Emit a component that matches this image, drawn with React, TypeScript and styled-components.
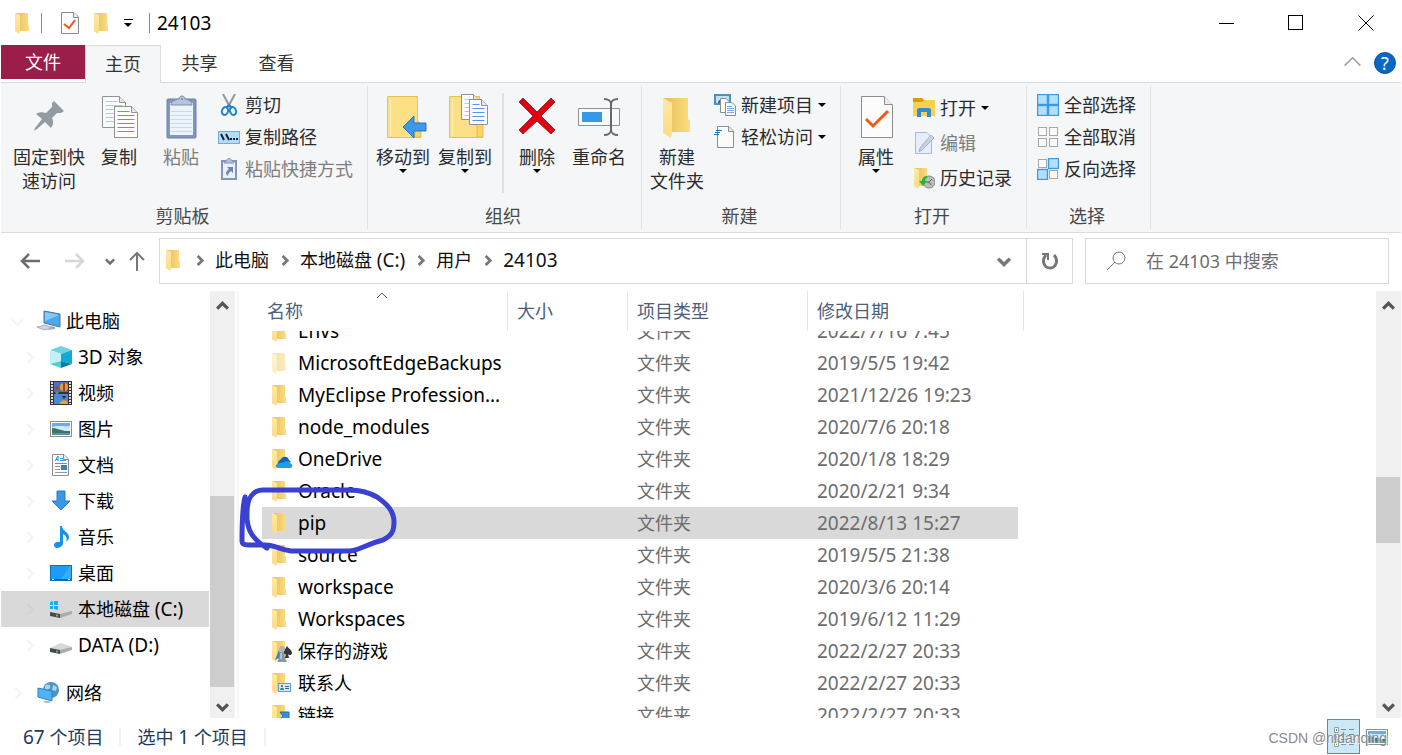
import React, { useLayoutEffect, useRef } from "react";
import styled, { createGlobalStyle, css } from "styled-components";

const GlobalStyle = createGlobalStyle`
  * { box-sizing: border-box; }
  body { margin: 0; background: #fff; }
  button, input, table {
    font: inherit;
    color: inherit;
  }
  button {
    margin: 0;
    padding: 0;
    border: 0;
    background: none;
    text-align: center;
  }
  svg { display: block; flex: none; }
`;

/* ---------- text ---------- */

const Latin = styled.span`
  font-size: 19px;
`;

/* Latin runs are set one step larger than the Chinese characters around them. */
function Label({ children }: { children: string }) {
  return (
    <>
      {children.split(/([\x21-\x7e]+(?: [\x21-\x7e]+)*)/).map((part, i) =>
        i % 2 ? <Latin key={i}>{part}</Latin> : part
      )}
    </>
  );
}

/* ---------- icons ---------- */

function Folder({ faded = false, badge }: { faded?: boolean; badge?: React.ReactNode }) {
  return (
    <svg width="22" height="22" viewBox="0 0 22 22">
      <defs>
        <linearGradient id="fBack" x1="0" x2="1" y1="0" y2="0">
          <stop offset="0" stopColor="#e6bd57" />
          <stop offset="1" stopColor="#fbdd80" />
        </linearGradient>
        <linearGradient id="fFlap" x1="0" x2="0" y1="0" y2="1">
          <stop offset="0" stopColor="#ffe9a6" />
          <stop offset="1" stopColor="#fbdc82" />
        </linearGradient>
      </defs>
      <g opacity={faded ? 0.5 : 1}>
        <path d="M1 1H14V12L15 14V19H5Z" fill="url(#fBack)" />
        <path d="M1 1L6 3V19L5 22L1 19Z" fill="url(#fFlap)" />
      </g>
      {badge}
    </svg>
  );
}

const cloudBadge = (
  <g>
    <path d="M7 17C6 14 9 12 10 11C12 8 17 8 18 12L20 14L8 18Z" fill="#0a64b8" />
    <path d="M7 20C3 19 5 15 9 15L13 14C15 13 19 13 19 15C22 16 22 20 19 20Z" fill="#1e9de6" />
  </g>
);
const gamesBadge = (
  <g>
    <path d="M16 6C18 9 21 10 21 13C21 15 18 16 17 14L18 18H14L15 14C13 15 12 13 13 11Z" fill="#33363b" />
    <path d="M4 20L8 10L10 17Z" fill="#3b82c4" />
    <circle cx="11" cy="9" r="3" fill="#a9b4bd" />
    <path d="M9 12H13L14 18L16 22H6L8 18Z" fill="#8b98a3" />
    <path d="M10 13L10 19" stroke="#dfe6ea" />
  </g>
);
const contactBadge = (
  <g>
    <rect x="7.500" y="11.500" width="12" height="8" fill="#cfe8fa" stroke="#5da0c8" />
    <circle cx="11" cy="14" r="1" fill="#6b4a33" />
    <path d="M9 18C9 15 13 15 13 18Z" fill="#2f8a6a" />
    <path d="M14 14.500H18M14 16.500H18" stroke="#34719c" />
  </g>
);
const linkBadge = (
  <path d="M9 8H18V17L15 14L9 20L7 18L12 12Z" fill="#3a8fdd" stroke="#1f6db5" strokeWidth="1" />
);

function BigFolder() {
  return (
    <svg width="44" height="44" viewBox="0 0 44 44">
      <path d="M8 3H33V24L35 26V37H16Z" fill="url(#fBack)" />
      <path d="M8 3L17 8V37L16 43L8 38Z" fill="url(#fFlap)" />
    </svg>
  );
}

const flatFolder = (
  <g>
    <path d="M4.500 1.500H34.500V26L37.500 29V42.500H4.500Z" fill="#fddf85" stroke="#e7c04e" />
    <path d="M7.500 4V41" stroke="#fff0b8" />
    <path d="M32 42V29L35 26L38 29V42Z" fill="#fbd264" stroke="#e7c04e" />
  </g>
);

function sheet(x: number, y: number, w: number, h: number, line: string) {
  const rows: number[] = [];
  for (let r = y + 5; r < y + h - 3; r += 4) rows.push(r);
  return (
    <g>
      <path d={`M${x} ${y}H${x + w - 6}L${x + w} ${y + 6}V${y + h}H${x}Z`} fill="#fcfcfd" stroke="#929292" />
      <path d={`M${x + w - 6} ${y}V${y + 6}H${x + w}`} fill="#e6e6e6" stroke="#929292" />
      {rows.map((r, i) => (
        <path key={r} d={`M${x + 3} ${r}H${x + w - (i === 0 ? 8 : 3)}`} stroke={line} />
      ))}
    </g>
  );
}

const PinIcon = () => (
  <svg width="44" height="44" viewBox="0 0 44 44">
    <path d="M27 6L37 16L34 18L30 18L25 23C27 27 26 30 24 33L18 27L10 34L7 36L8 33L15 24L9 19C12 17 15 17 19 18L25 12V8Z" fill="#919ca2" />
  </svg>
);
const CopyIcon = () => (
  <svg width="44" height="48" viewBox="0 0 44 48">
    {sheet(5.5, 3.5, 23, 31, "#a9cbf6")}
    {sheet(17.5, 13.5, 23, 31, "#5596ea")}
  </svg>
);
const PasteIcon = () => (
  <svg width="44" height="48" viewBox="0 0 44 48">
    <rect x="8" y="6" width="29" height="39" rx="1" fill="#8195bd" stroke="#6c80a8" />
    <rect x="11" y="10" width="23" height="32" fill="#edf3fb" />
    <path d="M12 18.500H33M12 22.500H33M12 26.500H33M12 30.500H33M12 34.500H33M12 38.500H33" stroke="#ccd8e8" />
    <path d="M12 12C12 8 16 7 20 6C20 2 26 2 26 6C30 7 33 8 33 12Z" fill="#b7c3da" stroke="#7c90b4" />
    <circle cx="23" cy="6" r="1" fill="#6f84aa" />
  </svg>
);
const MoveToIcon = () => (
  <svg width="48" height="48" viewBox="0 0 48 48">
    <g transform="translate(4 2)">{flatFolder}</g>
    <path d="M24 34L35 23V30H47V38H35V45Z" fill="#3a9ae6" stroke="#2577bd" />
  </svg>
);
const CopyToIcon = () => (
  <svg width="48" height="48" viewBox="0 0 48 48">
    <g transform="translate(4 2)">{flatFolder}</g>
    {sheet(20.5, 1.5, 18, 25, "#a9cbf6")}
    {sheet(28.5, 6.5, 18, 25, "#5596ea")}
  </svg>
);
const DeleteIcon = () => (
  <svg width="44" height="44" viewBox="0 0 44 44">
    <path d="M4 7L8 3L22 17L36 3L40 7L26 21L40 35L36 39L22 26L8 39L4 35L18 21Z" fill="#e3000f" stroke="#8f2630" />
  </svg>
);
const RenameIcon = () => (
  <svg width="44" height="44" viewBox="0 0 44 44">
    <path d="M1.500 13.500H42.500V30.500H1.500Z" fill="#f8f9fa" stroke="#929292" />
    <rect x="5" y="17" width="20" height="10" fill="#3699e8" />
    <path d="M27 4C31 4 34 6 34 9V35C34 38 31 40 27 40M41 4C37 4 34 6 34 9M34 35C34 38 37 40 41 40" fill="none" stroke="#696969" strokeWidth="2" />
  </svg>
);
const PropertiesIcon = () => (
  <svg width="44" height="44" viewBox="0 0 44 44">
    <path d="M7.500 1.500H30L38.500 10V42.500H7.500Z" fill="#fcfcfc" stroke="#8c8c8c" />
    <path d="M30.500 1.500V9.500H38.500" fill="#ebebeb" stroke="#8c8c8c" />
    <path d="M12 24L19 31L34 16" fill="none" stroke="#f25a18" strokeWidth="3" />
  </svg>
);
const SmallCheckIcon = () => (
  <svg width="18" height="22" viewBox="0 0 18 22">
    <path d="M.5 .5H13L17.500 5V21.500H.5Z" fill="#fbfbfb" stroke="#8a8a8a" />
    <path d="M12.500 .5V5.500H17.500" fill="#eee" stroke="#8a8a8a" />
    <path d="M3 12L8 16L14 8" fill="none" stroke="#ee5a1b" strokeWidth="2" />
  </svg>
);
const ScissorsIcon = () => (
  <svg width="22" height="22" viewBox="0 0 22 22">
    <path d="M5 0L12 13M17 0L10 13" stroke="#8d98a0" strokeWidth="2" />
    <path d="M11 11L8 14M11 11L14 14" stroke="#1c7fc0" strokeWidth="2" />
    <ellipse cx="7" cy="17" rx="3" ry="4" fill="none" stroke="#1d86c7" strokeWidth="2" transform="rotate(20 7 17)" />
    <ellipse cx="15" cy="17" rx="3" ry="4" fill="none" stroke="#1d86c7" strokeWidth="2" transform="rotate(-20 15 17)" />
  </svg>
);
const PathIcon = () => (
  <svg width="22" height="22" viewBox="0 0 22 22">
    <rect x=".5" y="5.500" width="21" height="12" fill="#b3dcfb" stroke="#7aa9cc" />
    <path d="M3 8L6 14M8 8L11 14" stroke="#17242e" strokeWidth="2" />
    <path d="M12 13H14M15 13H17M18 13H20" stroke="#17242e" strokeWidth="2" />
  </svg>
);
const ShortcutIcon = () => (
  <svg width="22" height="22" viewBox="0 0 22 22">
    <rect x="4" y="3" width="14" height="18" fill="#eaf0f9" stroke="#8295bb" strokeWidth="2" />
    <path d="M6 5C6 3 9 3 9 2C9 0 13 0 13 2C13 3 16 3 16 5Z" fill="#b3c0da" stroke="#8295bb" />
    <path d="M9 9H15V15L13 13C11 14 10 16 10 18L8 16C8 14 9 12 11 11Z" fill="#6d84ac" />
  </svg>
);
const NewItemIcon = () => (
  <svg width="22" height="22" viewBox="0 0 22 22">
    <rect x="1" y="1" width="15" height="9" fill="#bfe2f7" stroke="#4d8fb5" strokeWidth="2" />
    <path d="M4 9C4 5 8 5 8 9Z" fill="#2d6a58" />
    <path d="M6.500 4.500H12L15.500 8V18.500H6.500Z" fill="#fafafa" stroke="#8d8d8d" />
    <path d="M11.500 8.500H18L21.500 12V21.500H11.500Z" fill="#fafafa" stroke="#8d8d8d" />
    <path d="M13 12.500H18M13 14.500H20M13 16.500H20M13 18.500H20" stroke="#76a9ea" />
  </svg>
);
const EasyAccessIcon = () => (
  <svg width="22" height="22" viewBox="0 0 22 22">
    <path d="M3.500 .5H15L19.500 5V21.500H3.500Z" fill="#fbfbfb" stroke="#8d8d8d" />
    <path d="M14.500 .5V5.500H19.500" fill="#e8e8e8" stroke="#8d8d8d" />
    <path d="M2 4.500H8M1 6.500H6M0 8.500H5" stroke="#2372b8" />
  </svg>
);
const OpenIcon = () => (
  <svg width="22" height="22" viewBox="0 0 22 22">
    <path d="M0 1H9L11 3H22V19H0Z" fill="#fbcf50" />
    <path d="M0 1H9L11 3L9 5H0Z" fill="#d99b00" />
    <path d="M4 20V13C4 12 5 11 6 11H16C17 11 18 12 18 13V20H14V15H8V20Z" fill="#3489d3" />
  </svg>
);
const EditIcon = () => (
  <svg width="22" height="22" viewBox="0 0 22 22">
    <path d="M2.500 .5H14L18.500 5V21.500H2.500Z" fill="#e7eefb" stroke="#a8b9d6" />
    <path d="M18 3L21 6L9 18L6 20L7 16Z" fill="#c5d3e8" stroke="#a0b2cd" />
  </svg>
);
const historyBadge = (
  <g>
    <circle cx="16" cy="15" r="6" fill="#b9bdbd" stroke="#7e8484" />
    <path d="M12 15H16L19 12M16 15L18 18" fill="none" stroke="#5d6262" />
    <path d="M14 9C10 9 9 12 9 14H6L10 19L14 14H12C12 12 13 11 14 11Z" fill="#28b334" />
  </g>
);

function SelectIcon({ on }: { on: number[] }) {
  return (
    <svg width="22" height="22" viewBox="0 0 22 22">
      {[0, 1, 2, 3].map((i) => {
        const lit = on.includes(i);
        const x = (i % 2) * 11;
        const y = i > 1 ? 11 : 0;
        return lit ? (
          <rect key={i} x={x + 0.5} y={y + 0.5} width="10" height="10" fill="#b5defd" stroke="#3a9be4" strokeWidth="1.4" />
        ) : (
          <rect key={i} x={x + 1.5} y={y + 1.5} width="8" height="8" fill="#fafafa" stroke="#a8a8a8" />
        );
      })}
    </svg>
  );
}

function Chevron({ dir, size = 10, color = "#666", weight = 2 }: { dir: "up" | "down" | "right"; size?: number; color?: string; weight?: number }) {
  const d = { up: "M1 8L6 3L11 8", down: "M1 4L6 9L11 4", right: "M4 1L9 6L4 11" }[dir];
  return (
    <svg width={size} height={size} viewBox="0 0 12 12">
      <path d={d} fill="none" stroke={color} strokeWidth={weight} />
    </svg>
  );
}
const DropArrow = () => (
  <svg width="8" height="4" viewBox="0 0 8 4">
    <path d="M0 0H8L4 4Z" fill="#000" />
  </svg>
);

function NavArrow({ kind, color }: { kind: "left" | "right" | "up"; color: string }) {
  const turn = { left: 0, right: 180, up: 90 }[kind];
  return (
    <svg width="20" height="20" viewBox="0 0 20 20">
      <path
        d="M20 10H2M9 3L2 10L9 17"
        fill="none"
        stroke={color}
        strokeWidth={kind === "up" ? 2 : 2.5}
        transform={`rotate(${turn} 10 10)`}
      />
    </svg>
  );
}

/* navigation tree icons */
const PcIcon = () => (
  <svg width="24" height="22" viewBox="0 0 24 22">
    <path d="M7 1L23 4V17L7 13Z" fill="#4aa9ee" stroke="#5b7282" />
    <path d="M8 2L22 5L8 11Z" fill="#85cbfa" />
    <path d="M13 16L18 17V19L11 20Z" fill="#9aa9b4" />
    <path d="M0 17L8 15L15 18L7 20Z" fill="#cfd6dc" stroke="#a6b0b8" />
  </svg>
);
const CubeIcon = () => (
  <svg width="22" height="22" viewBox="0 0 22 22">
    <path d="M11 0L22 4L11 8L0 4Z" fill="#6fd3e2" />
    <path d="M0 4L11 8V15L0 18Z" fill="#c3f0f3" />
    <path d="M22 4L11 8V15L22 18Z" fill="#12a9d6" />
    <path d="M0 18L11 15V22Z" fill="#4ccfd6" />
    <path d="M22 18L11 15V22Z" fill="#0b7f9c" />
  </svg>
);
const VideoIcon = () => (
  <svg width="22" height="24" viewBox="0 0 22 24">
    <rect width="22" height="24" fill="#333" />
    <path d="M2 1V23M20 1V23" stroke="#ddd" strokeWidth="2" strokeDasharray="2 1" />
    <rect x="4" y="1" width="14" height="10" fill="#4473c5" />
    <rect x="4" y="13" width="14" height="10" fill="#4c86d8" />
    <circle cx="14" cy="6" r="4" fill="#d9a52b" />
    <path d="M14 2V10" stroke="#b5352d" strokeWidth="2" />
    <circle cx="7" cy="7" r="2" fill="#c23b30" />
    <path d="M12 15H16L14 18Z" fill="#222" />
    <path d="M10 23C10 18 18 18 18 23Z" fill="#e7a820" />
    <path d="M5 11H9L8 13H6Z" fill="#46a33d" />
  </svg>
);
const PictureIcon = () => (
  <svg width="22" height="16" viewBox="0 0 22 16">
    <rect x=".5" y=".5" width="21" height="15" fill="#fff" stroke="#8f8f8f" />
    <rect x="2" y="2" width="18" height="12" fill="#6fa9ea" />
    <path d="M2 6C8 4 12 6 20 5V10H2Z" fill="#d2e9fb" />
    <path d="M2 7C6 7 10 9 15 10L20 10V12H2Z" fill="#3d7660" />
    <path d="M2 12H20V14H2Z" fill="#5b8ab5" />
  </svg>
);
const DocIcon = () => (
  <svg width="22" height="22" viewBox="0 0 22 22">
    <path d="M2.500 .5H14L18.500 5V21.500H2.500Z" fill="#fcfcfc" stroke="#8d8d8d" />
    <path d="M13.500 .5V5.500H18.500" fill="#e8e8e8" stroke="#8d8d8d" />
    <path d="M5 7L8 2V7M6 5.500H8" fill="none" stroke="#2b8fd0" strokeWidth="1" />
    <path d="M10 4.500H13M10 6.500H16M5 9.500H17" stroke="#3c9fda" strokeWidth="1" />
    <path d="M5 12.500H10M5 15.500H10M5 18.500H17" stroke="#8b9aa6" />
    <rect x="11" y="11" width="6" height="5" fill="#3e7fb0" />
  </svg>
);
const DownloadIcon = () => (
  <svg width="22" height="22" viewBox="0 0 22 22">
    <path d="M7 1H15V11H20L11 20L2 11H7Z" fill="#3b97e3" stroke="#2b7bc2" />
  </svg>
);
const MusicIcon = () => (
  <svg width="22" height="24" viewBox="0 0 22 24">
    <path d="M10 1H12C12 6 19 7 19 12C19 15 17 16 16 16C18 12 15 10 13 9V19C12 23 4 25 4 20C4 17 8 16 10 17Z" fill="#1393ea" />
  </svg>
);
const DesktopIcon = () => (
  <svg width="22" height="16" viewBox="0 0 22 16">
    <rect x=".5" y=".5" width="21" height="15" fill="#1b9cf8" stroke="#0f70b8" />
    <path d="M11 14L20 1H21V14Z" fill="#3aadff" />
    <path d="M1 14.500H21" stroke="#0c5f9e" />
    <path d="M2 14.500H4M18 14.500H20" stroke="#fff" />
  </svg>
);
function DiskIcon({ system = false }: { system?: boolean }) {
  return (
    <svg width="22" height="20" viewBox="0 0 22 20">
      <path d="M0 13L11 8L22 12L11 17Z" fill="#d5d7d9" />
      <path d="M0 13L10 15V19L0 17Z" fill="#48494b" />
      <path d="M10 15L22 12V15L10 19Z" fill="#a9abad" />
      <path d="M6 16.500H8" stroke="#53c653" strokeWidth="2" />
      {system && (
        <path d="M0 3L3 2V6H0ZM4 2H8V6H4ZM0 7H3V10L0 10ZM4 7H8V11L4 10Z" fill="#14b1ef" />
      )}
    </svg>
  );
}
const NetworkIcon = () => (
  <svg width="24" height="22" viewBox="0 0 24 22">
    <circle cx="14" cy="8" r="8" fill="#4b95c4" />
    <path d="M8 4C11 1 14 3 13 6C11 8 9 8 8 10ZM16 3L20 5L19 9L15 8Z" fill="#a8d4ec" />
    <path d="M1 6L15 9V19L1 15Z" fill="#4fb3f4" stroke="#2f85bf" />
    <path d="M6 19L12 19L14 21H8Z" fill="#b4bdc5" />
  </svg>
);

/* ---------- window shell ---------- */

const Window = styled.div`
  display: flex;
  flex-direction: column;
  height: 100vh;
  padding: 0 1px;
  overflow: hidden;
  background: #fff;
  color: #000;
  font: 18px/24px "Noto Sans", "Noto Sans CJK SC", sans-serif;
`;

const TitleBar = styled.header`
  display: flex;
  align-items: center;
  height: 45px;
  padding-left: 13px;
  flex: none;
`;
const QuickButton = styled.button<{ $gap?: number }>`
  display: flex;
  align-items: center;
  justify-content: center;
  flex-direction: column;
  gap: 3px;
  width: 22px;
  height: 24px;
  margin-left: ${(p) => p.$gap ?? 0}px;
`;
const TitleRule = styled.span<{ $gap: number }>`
  width: 1px;
  height: 20px;
  margin-left: ${(p) => p.$gap}px;
  background: #8c8c8c;
`;
const Title = styled.h1`
  flex: 1;
  margin: 0 0 0 7px;
  font-size: 19px;
  font-weight: 400;
`;
const Dash = styled.span`
  width: 9px;
  height: 1px;
  background: #000;
`;
const WindowButton = styled.button`
  display: flex;
  align-items: center;
  justify-content: center;
  width: 70px;
  height: 45px;
`;

const TabBar = styled.nav`
  display: flex;
  height: 38px;
  flex: none;
  border-bottom: 1px solid #dadbdc;
`;
const Tab = styled.button<{ $kind?: "file" | "active" }>`
  width: 77px;
  height: 37px;
  padding-bottom: 2px;
  color: #333;
  ${(p) =>
    p.$kind === "file" &&
    css`
      width: 84px;
      height: 34px;
      padding-bottom: 0;
      background: #9b1d4a;
      color: #fff;
    `}
  ${(p) =>
    p.$kind === "active" &&
    css`
      width: 76px;
      height: 38px;
      border: 1px solid #dadbdc;
      border-bottom: 0;
      background: #f5f6f7;
    `}
`;
const TabTools = styled.div`
  display: flex;
  align-items: center;
  gap: 12px;
  margin-left: auto;
  padding: 0 5px 2px 0;
`;
const HelpButton = styled.button`
  width: 22px;
  height: 22px;
  border: 1px solid #0a539c;
  border-radius: 50%;
  background: #0668c8;
  color: #fff;
  line-height: 20px;
`;

/* ---------- ribbon ---------- */

const Ribbon = styled.div`
  display: flex;
  flex: none;
  height: 150px;
  padding: 3px 0;
  border-bottom: 1px solid #dadbdc;
  background: #f5f6f7;
`;
const Group = styled.section<{ $width: number }>`
  display: flex;
  flex-direction: column;
  flex: none;
  width: ${(p) => p.$width}px;
  border-right: 1px solid #e2e3e4;
`;
const GroupBody = styled.div<{ $indent: number }>`
  display: flex;
  align-items: flex-start;
  flex: 1;
  padding: 6px 0 0 ${(p) => p.$indent}px;
`;
const GroupCaption = styled.h2`
  margin: 0;
  padding: 0 3px 1px 0;
  color: #484848;
  font-size: 18px;
  line-height: 24px;
  font-weight: 400;
  text-align: center;
`;
const BigButton = styled.button<{ $width?: number }>`
  display: flex;
  flex-direction: column;
  align-items: center;
  width: ${(p) => p.$width ?? 62}px;
  color: #2b2b2b;
  white-space: nowrap;
  &:disabled { color: #7d7d7d; }
`;
const BigIcon = styled.span`
  display: flex;
  align-items: center;
  height: 50px;
  margin-bottom: 3px;
`;
const SmallList = styled.div<{ $gap?: number; $left?: number; $top?: number }>`
  display: flex;
  flex-direction: column;
  align-items: flex-start;
  gap: ${(p) => p.$gap ?? 8}px;
  margin: ${(p) => p.$top ?? 1}px 0 0 ${(p) => p.$left ?? 0}px;
`;
const SmallButton = styled.button`
  display: flex;
  align-items: center;
  gap: 5px;
  height: 24px;
  color: #2b2b2b;
  white-space: nowrap;
  &:disabled { color: #7d7d7d; }
`;
const InnerRule = styled.span`
  width: 2px;
  height: 100px;
  margin: 1px 2px 0 6px;
  background: #dfe0e2;
`;

/* ---------- address row ---------- */

const AddressRow = styled.div`
  display: flex;
  flex: none;
  height: 58px;
  padding: 5px 12px 7px 14px;
`;
const NavButton = styled.button<{ $width: number }>`
  display: flex;
  align-items: center;
  justify-content: center;
  width: ${(p) => p.$width}px;
`;
const AddressBox = styled.div`
  display: flex;
  flex: 1;
  border: 1px solid #d9d9d9;
`;
const Crumbs = styled.ol`
  display: flex;
  align-items: center;
  flex: 1;
  margin: 0;
  padding: 0 0 2px 5px;
  list-style: none;
`;
const Crumb = styled.li`
  display: flex;
  align-items: center;
  gap: 10px;
  margin-left: 10px;
  &:first-of-type { margin-left: 7px; }
`;
const CrumbLink = styled.a`
  color: #111;
  text-decoration: none;
`;
const RefreshButton = styled.button`
  display: flex;
  align-items: center;
  justify-content: center;
  width: 46px;
  border-left: 1px solid #d9d9d9;
`;
const SearchBox = styled.label`
  display: flex;
  align-items: center;
  width: 304px;
  margin-left: 12px;
  padding-left: 20px;
  gap: 20px;
  border: 1px solid #d9d9d9;
`;
const SearchInput = styled.input`
  flex: 1;
  min-width: 0;
  padding: 0;
  border: 0;
  outline: 0;
  background: none;
  &::placeholder { color: #6d6d6d; opacity: 1; }
`;

/* ---------- main area ---------- */

const Main = styled.div`
  display: flex;
  flex: 1;
  min-height: 0;
`;
const Tree = styled.ul`
  width: 209px;
  flex: none;
  margin: 0;
  padding: 12px 0 0;
  overflow: hidden;
  list-style: none;
`;
const TreeItem = styled.li<{ $level: number; $selected?: boolean; $spaced?: boolean }>`
  display: flex;
  align-items: center;
  height: 36px;
  margin: ${(p) => (p.$spaced ? 12 : 0)}px 1px 0 0;
  padding-left: ${(p) => 10 + p.$level * 12}px;
  background: ${(p) => (p.$selected ? "#d9d9d9" : "transparent")};
`;
const TreeIcon = styled.span`
  display: flex;
  justify-content: center;
  width: 24px;
  margin: 0 5px 0 13px;
`;
const ScrollTrack = styled.div`
  display: flex;
  flex-direction: column;
  align-items: flex-start;
  width: 25px;
  flex: none;
  background: #f0f0f0;
`;
const ScrollButton = styled.button<{ $height: number }>`
  display: flex;
  align-items: center;
  justify-content: center;
  width: 25px;
  height: ${(p) => p.$height}px;
  flex: none;
`;
const ScrollSpace = styled.span<{ $grow: number }>`
  flex: ${(p) => p.$grow} 0 0;
`;
const ScrollThumb = styled.span<{ $grow: number }>`
  flex: ${(p) => p.$grow} 0 0;
  width: 24px;
  background: #cdcdcd;
`;
const ListPane = styled.div`
  position: relative;
  display: flex;
  flex: 1;
  min-width: 0;
  margin-left: 2px;
  border-left: 2px solid #f5f5f5;
`;
const ListScroller = styled.div`
  flex: 1;
  padding-left: 19px;
  overflow: hidden;
`;
const FileTable = styled.table`
  width: 766px;
  table-layout: fixed;
  border-collapse: separate;
  border-spacing: 0;
`;
const HeadCell = styled.th<{ $width: number }>`
  position: sticky;
  top: 0;
  z-index: 1;
  width: ${(p) => p.$width}px;
  height: 40px;
  padding: 0 0 0 9px;
  border-right: 1px solid #e5e5e5;
  background: #fff;
  color: #4c607a;
  font-weight: 400;
  text-align: left;
`;
const SortMark = styled.span`
  position: absolute;
  top: -1px;
  left: 118px;
`;
const FileRow = styled.tr<{ $selected?: boolean }>`
  --row: ${(p) => (p.$selected ? "#d9d9d9" : "transparent")};
`;
const Cell = styled.td`
  height: 32px;
  padding: 0 0 0 9px;
  background: var(--row);
  background-clip: padding-box;
  color: #6d6d6d;
  line-height: 24px;
  white-space: nowrap;
  &:last-child { border-right: 6px solid transparent; }
`;
const NameCell = styled(Cell)`
  border-left: 4px solid transparent;
  color: #000;
`;
const NameContent = styled.span`
  display: flex;
  align-items: center;
  gap: 5px;
`;
const PenMark = styled.svg`
  position: absolute;
  top: 193px;
  left: -2px;
  z-index: 2;
  pointer-events: none;
`;

/* ---------- status bar ---------- */

const StatusBar = styled.footer`
  position: relative;
  display: flex;
  align-items: center;
  flex: none;
  height: 37px;
  padding-left: 22px;
  color: #1e395b;
`;
const StatusText = styled.span`
  padding-right: 16px;
  margin-right: 16px;
  border-right: 2px solid #f2f2f2;
  line-height: 18px;
`;
const ViewButtons = styled.div`
  display: flex;
  height: 35px;
  margin-left: auto;
  padding-right: 8px;
`;
const ViewButton = styled.button<{ $active?: boolean }>`
  display: flex;
  align-items: center;
  justify-content: center;
  width: 33px;
  border: 1px solid ${(p) => (p.$active ? "#2a9bd3" : "transparent")};
  background: ${(p) => (p.$active ? "#cbe8f6" : "transparent")};
`;
const Watermark = styled.span`
  position: absolute;
  right: 14px;
  bottom: 7px;
  color: #8a8a8a;
  font: 14px/20px "Liberation Sans", sans-serif;
  text-shadow: 1px 1px 1px #fff;
  pointer-events: none;
`;

/* ---------- data ---------- */

const treeItems: { label: string; icon: React.ReactNode; level: number; selected?: boolean; spaced?: boolean }[] = [
  { label: "此电脑", icon: <PcIcon />, level: 0 },
  { label: "3D 对象", icon: <CubeIcon />, level: 1 },
  { label: "视频", icon: <VideoIcon />, level: 1 },
  { label: "图片", icon: <PictureIcon />, level: 1 },
  { label: "文档", icon: <DocIcon />, level: 1 },
  { label: "下载", icon: <DownloadIcon />, level: 1 },
  { label: "音乐", icon: <MusicIcon />, level: 1 },
  { label: "桌面", icon: <DesktopIcon />, level: 1 },
  { label: "本地磁盘 (C:)", icon: <DiskIcon system />, level: 1, selected: true },
  { label: "DATA (D:)", icon: <DiskIcon />, level: 1 },
  { label: "网络", icon: <NetworkIcon />, level: 0, spaced: true },
];

const files: { name: string; date: string; faded?: boolean; badge?: React.ReactNode; selected?: boolean }[] = [
  { name: "Envs", date: "2022/7/16 7:45" },
  { name: "MicrosoftEdgeBackups", date: "2019/5/5 19:42", faded: true },
  { name: "MyEclipse Profession...", date: "2021/12/26 19:23" },
  { name: "node_modules", date: "2020/7/6 20:18" },
  { name: "OneDrive", date: "2020/1/8 18:29", badge: cloudBadge },
  { name: "Oracle", date: "2020/2/21 9:34" },
  { name: "pip", date: "2022/8/13 15:27", selected: true },
  { name: "source", date: "2019/5/5 21:38" },
  { name: "workspace", date: "2020/3/6 20:14" },
  { name: "Workspaces", date: "2019/6/12 11:29" },
  { name: "保存的游戏", date: "2022/2/27 20:33", badge: gamesBadge },
  { name: "联系人", date: "2022/2/27 20:33", badge: contactBadge },
  { name: "链接", date: "2022/2/27 20:33", badge: linkBadge },
];

function Big({ icon, lines, width, arrow, disabled }: { icon: React.ReactNode; lines: string[]; width?: number; arrow?: boolean; disabled?: boolean }) {
  return (
    <BigButton $width={width} disabled={disabled}>
      <BigIcon>{icon}</BigIcon>
      {lines.map((l) => (
        <span key={l}>{l}</span>
      ))}
      {arrow && <DropArrow />}
    </BigButton>
  );
}

function Small({ icon, label, arrow, disabled }: { icon: React.ReactNode; label: string; arrow?: boolean; disabled?: boolean }) {
  return (
    <SmallButton disabled={disabled}>
      {icon}
      <span>{label}</span>
      {arrow && <DropArrow />}
    </SmallButton>
  );
}

function ScrollBar({ before, thumb, after }: { before: number; thumb: number; after: number }) {
  return (
    <ScrollTrack>
      <ScrollButton $height={30} aria-label="向上滚动"><Chevron dir="up" size={13} color="#555" weight={3} /></ScrollButton>
      <ScrollSpace $grow={before} />
      <ScrollThumb $grow={thumb} />
      <ScrollSpace $grow={after} />
      <ScrollButton $height={24} aria-label="向下滚动"><Chevron dir="down" size={13} color="#555" weight={3} /></ScrollButton>
    </ScrollTrack>
  );
}

export default function App() {
  const scroller = useRef<HTMLDivElement>(null);

  useLayoutEffect(() => {
    if (scroller.current) scroller.current.scrollTop = 16;
  }, []);

  return (
    <Window>
      <GlobalStyle />
      <TitleBar>
        <QuickButton aria-label="24103"><Folder /></QuickButton>
        <TitleRule $gap={5} />
        <QuickButton $gap={17} aria-label="属性"><SmallCheckIcon /></QuickButton>
        <QuickButton $gap={12} aria-label="新建文件夹"><Folder /></QuickButton>
        <QuickButton $gap={2} aria-label="自定义快速访问工具栏"><Dash /><DropArrow /></QuickButton>
        <TitleRule $gap={10} />
        <Title>24103</Title>
        <WindowButton aria-label="最小化">
          <svg width="16" height="16" viewBox="0 0 16 16"><path d="M1 8.500H16" stroke="#000" /></svg>
        </WindowButton>
        <WindowButton aria-label="最大化">
          <svg width="16" height="16" viewBox="0 0 16 16"><rect x=".5" y=".5" width="14" height="14" fill="none" stroke="#000" /></svg>
        </WindowButton>
        <WindowButton aria-label="关闭">
          <svg width="16" height="16" viewBox="0 0 16 16"><path d="M.5 .5L15.500 15.500M15.500 .5L.5 15.500" stroke="#000" /></svg>
        </WindowButton>
      </TitleBar>

      <TabBar>
        <Tab $kind="file">文件</Tab>
        <Tab $kind="active">主页</Tab>
        <Tab>共享</Tab>
        <Tab>查看</Tab>
        <TabTools>
          <button aria-label="最小化功能区"><Chevron dir="up" size={19} color="#a0a0a0" weight={1} /></button>
          <HelpButton aria-label="帮助">?</HelpButton>
        </TabTools>
      </TabBar>

      <Ribbon>
        <Group $width={367}>
          <GroupBody $indent={6}>
            <Big icon={<PinIcon />} lines={["固定到快", "速访问"]} width={84} />
            <Big icon={<CopyIcon />} lines={["复制"]} width={56} />
            <Big icon={<PasteIcon />} lines={["粘贴"]} width={68} disabled />
            <SmallList $left={3}>
              <Small icon={<ScissorsIcon />} label="剪切" />
              <Small icon={<PathIcon />} label="复制路径" />
              <Small icon={<ShortcutIcon />} label="粘贴快捷方式" disabled />
            </SmallList>
          </GroupBody>
          <GroupCaption>剪贴板</GroupCaption>
        </Group>

        <Group $width={274}>
          <GroupBody $indent={4}>
            <Big icon={<MoveToIcon />} lines={["移动到"]} arrow />
            <Big icon={<CopyToIcon />} lines={["复制到"]} arrow />
            <InnerRule />
            <Big icon={<DeleteIcon />} lines={["删除"]} arrow />
            <Big icon={<RenameIcon />} lines={["重命名"]} />
          </GroupBody>
          <GroupCaption>组织</GroupCaption>
        </Group>

        <Group $width={199}>
          <GroupBody $indent={4}>
            <Big icon={<BigFolder />} lines={["新建", "文件夹"]} />
            <SmallList $left={6}>
              <Small icon={<NewItemIcon />} label="新建项目" arrow />
              <Small icon={<EasyAccessIcon />} label="轻松访问" arrow />
            </SmallList>
          </GroupBody>
          <GroupCaption>新建</GroupCaption>
        </Group>

        <Group $width={186}>
          <GroupBody $indent={4}>
            <Big icon={<PropertiesIcon />} lines={["属性"]} arrow />
            <SmallList $left={6} $gap={11} $top={4}>
              <Small icon={<OpenIcon />} label="打开" arrow />
              <Small icon={<EditIcon />} label="编辑" disabled />
              <Small icon={<Folder badge={historyBadge} />} label="历史记录" />
            </SmallList>
          </GroupBody>
          <GroupCaption>打开</GroupCaption>
        </Group>

        <Group $width={124}>
          <GroupBody $indent={10}>
            <SmallList>
              <Small icon={<SelectIcon on={[0, 1, 2, 3]} />} label="全部选择" />
              <Small icon={<SelectIcon on={[]} />} label="全部取消" />
              <Small icon={<SelectIcon on={[1, 2]} />} label="反向选择" />
            </SmallList>
          </GroupBody>
          <GroupCaption>选择</GroupCaption>
        </Group>
      </Ribbon>

      <AddressRow>
        <NavButton $width={30} aria-label="返回"><NavArrow kind="left" color="#6e6e6e" /></NavButton>
        <NavButton $width={60} aria-label="前进"><NavArrow kind="right" color="#d6d6d6" /></NavButton>
        <NavButton $width={10} aria-label="最近浏览的位置"><Chevron dir="down" color="#6e6e6e" weight={3} /></NavButton>
        <NavButton $width={44} aria-label="上移"><NavArrow kind="up" color="#777" /></NavButton>
        <AddressBox>
          <Crumbs>
            <Folder />
            {["此电脑", "本地磁盘 (C:)", "用户", "24103"].map((c) => (
              <Crumb key={c}>
                <Chevron dir="right" size={11} color="#777" weight={3} />
                <CrumbLink href="#"><Label>{c}</Label></CrumbLink>
              </Crumb>
            ))}
          </Crumbs>
          <NavButton $width={44} aria-label="以前的位置"><Chevron dir="down" size={14} color="#777" weight={3} /></NavButton>
          <RefreshButton aria-label="刷新">
            <svg width="18" height="18" viewBox="0 0 18 18">
              <path d="M13 3C18 8 15 16 9 16C3 16 0 8 5 3" fill="none" stroke="#777" strokeWidth="3" />
              <path d="M1 2H7V8" fill="none" stroke="#777" strokeWidth="2" />
            </svg>
          </RefreshButton>
        </AddressBox>
        <SearchBox>
          <svg width="20" height="20" viewBox="0 0 20 20">
            <circle cx="13" cy="7" r="6" fill="none" stroke="#777" />
            <path d="M9 11L1 19" stroke="#777" />
          </svg>
          <SearchInput aria-label="搜索" placeholder="在 24103 中搜索" />
        </SearchBox>
      </AddressRow>

      <Main>
        <Tree>
          {treeItems.map((t, i) => (
            <TreeItem key={t.label} $level={t.level} $selected={t.selected} $spaced={t.spaced}>
              <Chevron dir={i === 0 ? "down" : "right"} size={13} color={t.selected ? "#d2d2d2" : "#f4f4f4"} weight={2} />
              <TreeIcon>{t.icon}</TreeIcon>
              <span><Label>{t.label}</Label></span>
            </TreeItem>
          ))}
        </Tree>
        <ScrollBar before={175} thumb={191} after={7} />
        <ListPane>
          <ListScroller ref={scroller}>
            <FileTable>
              <thead>
                <tr>
                  <HeadCell $width={250}>
                    名称
                    <SortMark><Chevron dir="up" size={12} color="#555" weight={1} /></SortMark>
                  </HeadCell>
                  <HeadCell $width={120}>大小</HeadCell>
                  <HeadCell $width={180}>项目类型</HeadCell>
                  <HeadCell $width={216}>修改日期</HeadCell>
                </tr>
              </thead>
              <tbody>
                {files.map((f) => (
                  <FileRow key={f.name} $selected={f.selected}>
                    <NameCell>
                      <NameContent>
                        <Folder faded={f.faded} badge={f.badge} />
                        <span><Label>{f.name}</Label></span>
                      </NameContent>
                    </NameCell>
                    <Cell />
                    <Cell>文件夹</Cell>
                    <Cell><Label>{f.date}</Label></Cell>
                  </FileRow>
                ))}
              </tbody>
            </FileTable>
          </ListScroller>
          <PenMark width="164" height="74" viewBox="237 484 164 74">
            <path
              d="M245 497C243 505 242 518 242 541C242 544 244 545 248 545H265C276 545 280 550 291 551H350C361 550 366 544 383 540C391 536 394 532 394 522C394 511 387 504 377 497C368 492 361 490 350 490H263C253 490 247 498 247 513C246 531 254 540 267 548"
              fill="none"
              stroke="#3a41d2"
              strokeWidth="5"
              strokeLinecap="round"
              strokeLinejoin="round"
            />
          </PenMark>
          <ScrollBar before={156} thumb={66} after={151} />
        </ListPane>
      </Main>

      <StatusBar>
        <StatusText><Label>67 个项目</Label></StatusText>
        <StatusText><Label>选中 1 个项目</Label></StatusText>
        <ViewButtons>
          <ViewButton $active aria-label="详细信息">
            <svg width="22" height="22" viewBox="0 0 22 22">
              <path d="M1.500 1.500H5.500V6.500H1.500ZM1.500 8.500H5.500V13.500H1.500ZM1.500 15.500H5.500V20.500H1.500Z" fill="#fff" stroke="#9a9a9a" />
              <path d="M8 3.500H13M16 3.500H21M8 8.500H13M16 8.500H21M8 13.500H13M16 13.500H21M8 18.500H13M16 18.500H21" stroke="#7d8a90" />
              <path d="M3 4H4" stroke="#2a86c8" strokeWidth="2" />
              <path d="M3 11H4" stroke="#c0392b" strokeWidth="2" />
              <path d="M3 18H4" stroke="#7aa93c" strokeWidth="2" />
            </svg>
          </ViewButton>
          <ViewButton aria-label="大缩略图"><PictureIcon /></ViewButton>
        </ViewButtons>
        <Watermark>CSDN @nidanqing</Watermark>
      </StatusBar>
    </Window>
  );
}
